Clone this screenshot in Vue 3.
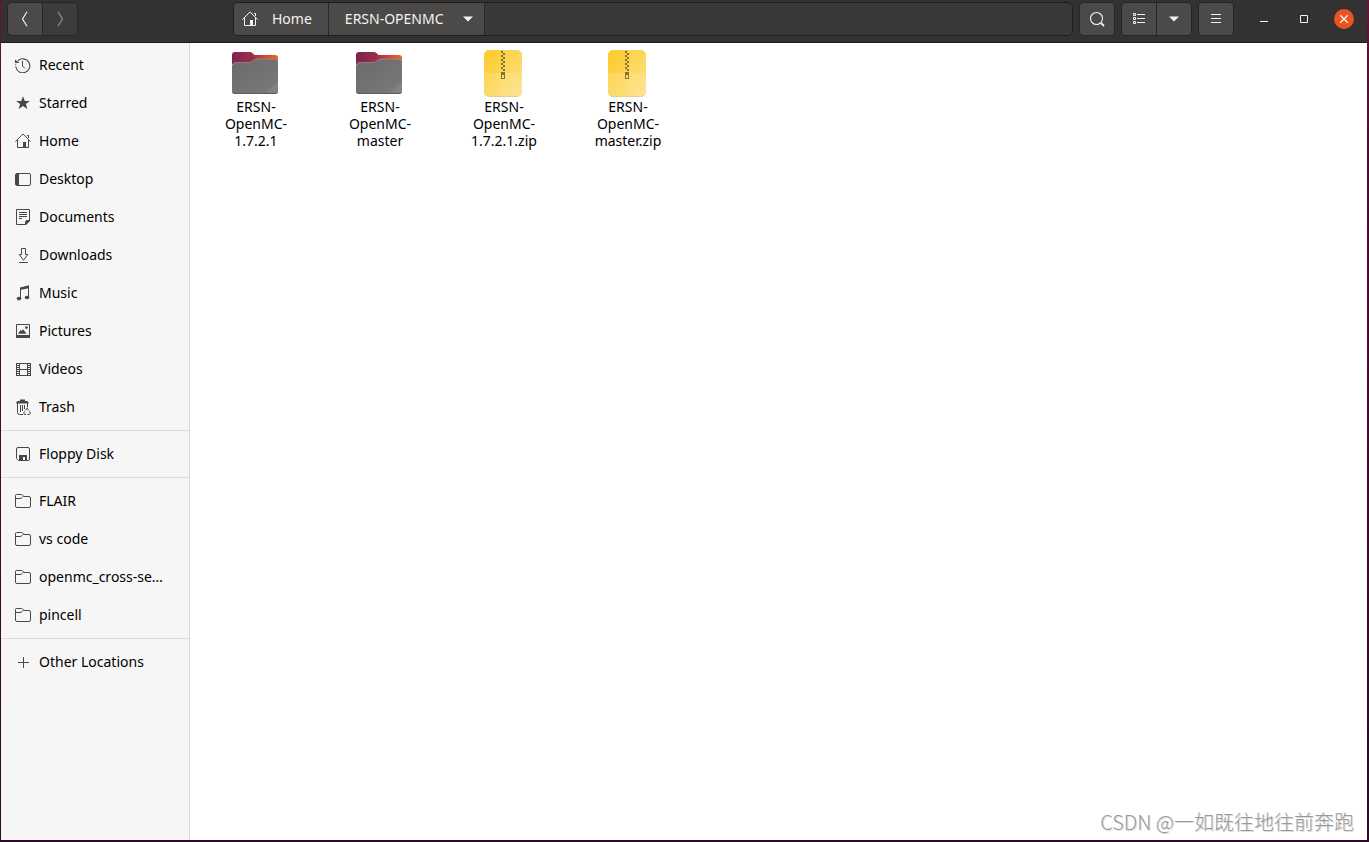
<script setup>
const groups = [
  [
    { icon: 'recent', label: 'Recent' },
    { icon: 'star', label: 'Starred' },
    { icon: 'home', label: 'Home' },
    { icon: 'desktop', label: 'Desktop' },
    { icon: 'documents', label: 'Documents' },
    { icon: 'downloads', label: 'Downloads' },
    { icon: 'music', label: 'Music' },
    { icon: 'pictures', label: 'Pictures' },
    { icon: 'videos', label: 'Videos' },
    { icon: 'trash', label: 'Trash' },
  ],
  [{ icon: 'floppy', label: 'Floppy Disk' }],
  [
    { icon: 'folder', label: 'FLAIR' },
    { icon: 'folder', label: 'vs code' },
    { icon: 'folder', label: 'openmc_cross-se…' },
    { icon: 'folder', label: 'pincell' },
  ],
  [{ icon: 'plus', label: 'Other Locations' }],
]

const files = [
  { type: 'folder', lines: ['ERSN-', 'OpenMC-', '1.7.2.1'] },
  { type: 'folder', lines: ['ERSN-', 'OpenMC-', 'master'] },
  { type: 'zip', lines: ['ERSN-', 'OpenMC-', '1.7.2.1.zip'] },
  { type: 'zip', lines: ['ERSN-', 'OpenMC-', 'master.zip'] },
]

const teeth = Array.from({ length: 10 }, (_, i) => ({ x: i % 2 ? 24 : 22, y: 2 + i * 2 }))
</script>

<template>
  <svg class="defs" aria-hidden="true">
    <defs>
      <linearGradient id="tab" x1="0" y1="0" x2="1" y2="0">
        <stop offset="0" stop-color="#7c2450" />
        <stop offset="0.45" stop-color="#9c2f48" />
        <stop offset="0.75" stop-color="#d94c30" />
        <stop offset="1" stop-color="#f0602a" />
      </linearGradient>
      <linearGradient id="front" x1="0" y1="0" x2="1" y2="1">
        <stop offset="0" stop-color="#6a6a6a" />
        <stop offset="1" stop-color="#7a7a7a" />
      </linearGradient>
      <linearGradient id="zip" x1="0" y1="0" x2="1" y2="1">
        <stop offset="0" stop-color="#fdca2c" />
        <stop offset="1" stop-color="#fde07a" />
      </linearGradient>
      <symbol id="i-recent" viewBox="0 0 16 16">
        <path d="M2.8 3.9A7 7 0 1 1 .9 10" fill="none" stroke="currentColor" stroke-width="1.1" />
        <path d="M.9 10A7 7 0 0 1 .7 7" fill="none" stroke="currentColor" stroke-dasharray="1 1" />
        <path d="M0 2.5V6H4.5z" fill="currentColor" />
        <path d="M7.5 4v5l2.5 2.5" fill="none" stroke="currentColor" />
      </symbol>
      <symbol id="i-star" viewBox="0 0 16 16">
        <path d="M8 1.3 9.8 6h5L10.9 9l1.5 5L8 11.1 3.6 14l1.5-5L1.2 6h5z" fill="currentColor" />
      </symbol>
      <symbol id="i-home" viewBox="0 0 16 16">
        <path d="M.4 8.6 8 .9l7.6 7.7M2.5 7v7.5h11V7M13.5 5V2.5h-1.4" fill="none" stroke="currentColor" />
        <path d="M8 9h3v5.5H8z" fill="currentColor" />
      </symbol>
      <symbol id="i-desktop" viewBox="0 0 16 16">
        <rect x=".5" y="2.5" width="15" height="12" rx="1.5" fill="none" stroke="currentColor" />
        <path d="M1 3h3v11H1z" fill="currentColor" />
      </symbol>
      <symbol id="i-documents" viewBox="0 0 16 16">
        <path d="M10 15.5H1.5V.5h13V12M4 3.5h8M4 5.5h8M4 7.5h8M4 9.5h3" fill="none" stroke="currentColor" />
        <path d="M10 16v-3.5L11.5 11H15v1l-4 4z" fill="currentColor" />
      </symbol>
      <symbol id="i-downloads" viewBox="0 0 16 16">
        <path d="M6.5 1.5h4v6h2.2L8.5 13.3 4.3 7.5h2.2zM4 15.5h9" fill="none" stroke="currentColor" />
      </symbol>
      <symbol id="i-music" viewBox="0 0 16 16">
        <path d="M5 2.5 14 .3v3L6 4.8v8.7H5zM13 3h1v9.5h-1z" fill="currentColor" />
        <ellipse cx="4" cy="13.6" rx="2.3" ry="1.8" fill="currentColor" />
        <ellipse cx="12" cy="12.5" rx="2.3" ry="1.8" fill="currentColor" />
      </symbol>
      <symbol id="i-pictures" viewBox="0 0 16 16">
        <path d="M1.5 1.5h13v12h-13z" fill="none" stroke="currentColor" />
        <path d="M1 12h14v3H1zM3 10.8 5.5 7l1 1L8 6.3l3.6 4.5z" fill="currentColor" />
        <circle cx="11.4" cy="4.6" r="1.4" fill="currentColor" />
      </symbol>
      <symbol id="i-videos" viewBox="0 0 16 16">
        <path d="M4 2.5h9M4 14.5h9M4 8.5h9M4.5 2v13M12.5 2v13M1.5 2v13M15.5 2v13" fill="none" stroke="currentColor" />
        <path d="M3 2v13M14 2v13" fill="none" stroke="currentColor" stroke-width="2" stroke-dasharray="1 1" />
      </symbol>
      <symbol id="i-trash" viewBox="0 0 16 16">
        <path d="M5 2V.6h5V2h2l1.500 1v1.500H1.300V3L3 2z" fill="currentColor" />
        <path d="M2.500 4v9.500q0 2 2 2H8M12.500 4v4.500M5.500 6v7M7.500 6v6M9.500 6v4" fill="none" stroke="currentColor" />
        <path d="m10.300 11.500 1.700-2.300 1.800 2.300M14.500 12.300l.9 1.700-.9 1.500h-2M11 15.500H9.500L8.700 14l.9-1.500" fill="none" stroke="currentColor" />
      </symbol>
      <symbol id="i-floppy" viewBox="0 0 16 16">
        <path d="M3 1.5h10q1.5 0 1.5 1.5v10q0 1.5-1.5 1.5H3.5l-2-2V3q0-1.5 1.5-1.5z" fill="none" stroke="currentColor" />
        <path d="M4 9h8v5h-2v-3H8v3H4z" fill="currentColor" />
      </symbol>
      <symbol id="i-folder" viewBox="0 0 16 16">
        <path d="M.5 13V2.5q0-1 1-1h5q1 0 1.5 1l.5 1h5.500q1.500 0 1.500 1.500v8q0 1.500-1.500 1.500H2Q.5 14.500.5 13zM.5 5.500H5q1.200 0 2-1l1-1" fill="none" stroke="currentColor" />
      </symbol>
      <symbol id="i-plus" viewBox="0 0 16 16">
        <path d="M3 8.500h11M8.500 3v11" fill="none" stroke="currentColor" />
      </symbol>
    </defs>
  </svg>

  <div class="window">
    <header class="bar">
      <div class="group">
        <button class="btn" type="button" aria-label="Back">
          <svg width="16" height="16" viewBox="0 0 16 16"><path d="M10 .8 5.500 8l4.500 7.200" fill="none" stroke="currentColor" stroke-width="1.200" /></svg>
        </button>
        <button class="btn off" type="button" aria-label="Forward" disabled>
          <svg width="16" height="16" viewBox="0 0 16 16"><path d="M6 .8 10.500 8 6 15.200" fill="none" stroke="currentColor" stroke-width="1.200" /></svg>
        </button>
      </div>
      <nav class="path" aria-label="Path">
        <button class="crumb" type="button">
          <svg width="16" height="16"><use href="#i-home" /></svg>Home
        </button>
        <button class="crumb current" type="button">
          ERSN-OPENMC
          <svg width="10" height="6" viewBox="0 0 10 6"><path d="M0 .5h10L5 5.500z" fill="currentColor" /></svg>
        </button>
      </nav>
      <div class="group">
        <button class="btn" type="button" aria-label="Search">
          <svg width="16" height="16" viewBox="0 0 16 16"><circle cx="7.500" cy="7.500" r="6" fill="none" stroke="currentColor" stroke-width="1.100" /><path d="m12 12 3 3" stroke="currentColor" stroke-width="1.800" /></svg>
        </button>
      </div>
      <div class="group">
        <button class="btn" type="button" aria-label="List view">
          <svg width="16" height="16" viewBox="0 0 16 16"><path d="M2.500 2.500h2v2h-2zM2.500 6.500h2v2h-2zM2.500 10.500h2v2h-2zM6 3.500h8M6 7.500h8M6 11.500h8" fill="none" stroke="currentColor" /></svg>
        </button>
        <button class="btn" type="button" aria-label="View options">
          <svg width="10" height="6" viewBox="0 0 10 6"><path d="M0 .5h10L5 5.500z" fill="currentColor" /></svg>
        </button>
      </div>
      <div class="group">
        <button class="btn" type="button" aria-label="Menu">
          <svg width="16" height="16" viewBox="0 0 16 16"><path d="M3 3.500h10M3 7.500h10M3 11.500h10" stroke="currentColor" /></svg>
        </button>
      </div>
      <div class="controls">
        <button type="button" aria-label="Minimize">
          <svg width="20" height="20" viewBox="0 0 20 20"><path d="M6 12.500h8" stroke="currentColor" /></svg>
        </button>
        <button type="button" aria-label="Maximize">
          <svg width="20" height="20" viewBox="0 0 20 20"><path d="M6.500 6.500h7v7h-7z" fill="none" stroke="currentColor" /></svg>
        </button>
        <button class="close" type="button" aria-label="Close">
          <svg width="20" height="20" viewBox="0 0 20 20"><path d="m6.200 6.200 7.600 7.600M13.800 6.200l-7.600 7.600" stroke="currentColor" stroke-width="1.400" /></svg>
        </button>
      </div>
    </header>

    <div class="body">
      <nav class="side" aria-label="Places">
        <ul v-for="(group, g) in groups" :key="g">
          <li v-for="item in group" :key="item.label">
            <a href="#">
              <svg width="16" height="16"><use :href="'#i-' + item.icon" /></svg>
              <span>{{ item.label }}</span>
            </a>
          </li>
        </ul>
      </nav>

      <main class="files">
        <a v-for="(file, f) in files" :key="f" class="file" href="#">
          <svg v-if="file.type === 'folder'" width="48" height="48" viewBox="1 0 48 48">
            <path d="M1 15V6q0-3 3-3h15q2 0 3 1.500L23.500 6H44q3 0 3 3v6z" fill="url(#tab)" />
            <path d="M1 17q0-3 3-3h14q2 0 3.500-1.500l1-1Q24 10 26 10h18q3 0 3 3v29q0 3-3 3H4q-3 0-3-3z" fill="url(#front)" />
            <path d="M1.500 16.500Q2 13.500 4 13.500h14q2 0 3.500-1.500T26 10h18q2.500 0 2.800 2.500" fill="none" stroke="#a09a98" stroke-opacity=".7" />
            <path d="M47 32v10q0 3-3 3H34z" fill="#fff" fill-opacity=".08" />
            <path d="M1.500 43q.5 1.500 2.500 1.500h40q2 0 2.500-1.500" fill="none" stroke="#5c5c5c" />
          </svg>
          <svg v-else width="48" height="48" viewBox="1 0 48 48">
            <rect x="5" y="2" width="38" height="46" rx="5" fill="#e3cf94" />
            <rect x="5" y="1" width="38" height="46" rx="5" fill="url(#zip)" />
            <path d="M5 24h38v18q0 5-5 5H10q-5 0-5-5z" fill="#fff" fill-opacity=".13" />
            <path d="M24 1h14q5 0 5 5v41H24z" fill="#fff" fill-opacity=".06" />
            <rect v-for="t in teeth" :key="t.y" :x="t.x" :y="t.y" width="2" height="2" fill="#867332" />
            <path d="M22 23h4v7h-4zM23 26v3h2v-3z" fill="#867332" fill-rule="evenodd" />
          </svg>
          <span v-for="line in file.lines" :key="line">{{ line }}</span>
        </a>
      </main>
    </div>
    <p class="mark">CSDN @一如既往地往前奔跑</p>
  </div>
</template>

<style>
body {
  margin: 0;
  background: #2c0a28;
}
</style>

<style scoped>
.defs {
  position: absolute;
  width: 0;
  height: 0;
}
.window {
  position: relative;
  display: flex;
  flex-direction: column;
  box-sizing: border-box;
  min-height: 100vh;
  border: solid #2c0a28;
  border-width: 0 2px 2px 1px;
  border-image: linear-gradient(#6b1233, #4a0a33 20%, #2c0a28) 1;
  border-image-width: 0 2px 2px 1px;
  background: #fff;
  color: #000;
  font: 14px/17px "Noto Sans", sans-serif;
}
button {
  padding: 0;
  border: 0;
  background: none;
  color: inherit;
  font: inherit;
}
svg {
  flex: none;
}
.bar {
  display: flex;
  align-items: center;
  gap: 6px;
  box-sizing: border-box;
  height: 43px;
  padding: 0 13px 5px 6px;
  border-bottom: 1px solid #1d1a1c;
  background: #333132;
  color: #f2f2f0;
}
.group {
  display: flex;
  gap: 1px;
  border: 1px solid #262425;
  border-radius: 5px;
  background: #262425;
  overflow: hidden;
}
.btn {
  display: flex;
  align-items: center;
  justify-content: center;
  width: 34px;
  height: 32px;
  background: #4b4a48;
}
.off {
  background: #3d3c3b;
  color: #929190;
}
.path {
  display: flex;
  flex: 1;
  height: 32px;
  margin-left: 149px;
  border: 1px solid #1f1d1d;
  border-radius: 5px;
  background: #3a3836;
  overflow: hidden;
}
.crumb {
  display: flex;
  align-items: center;
  gap: 14px;
  padding: 0 16px 0 8px;
  border-right: 1px solid #2a2828;
  background: #4b4a48;
}
.current {
  gap: 19px;
  padding: 0 11px 0 16px;
}
.controls {
  display: flex;
  gap: 20px;
  margin-left: 14px;
}
.controls button {
  display: flex;
  width: 20px;
  height: 20px;
  border-radius: 50%;
}
.controls .close {
  background: #e95420;
}
.body {
  display: flex;
  flex: 1;
}
.side {
  box-sizing: border-box;
  width: 189px;
  flex: none;
  padding-top: 3px;
  border-right: 1px solid #d5d5d5;
  background: #f6f6f6;
}
.side ul {
  margin: 0;
  padding: 0;
  list-style: none;
}
.side ul + ul {
  margin-top: 4px;
  padding-top: 4px;
  border-top: 1px solid #dcdcdc;
}
.side a {
  display: flex;
  align-items: center;
  gap: 8px;
  height: 38px;
  padding: 0 14px;
  color: inherit;
  text-decoration: none;
  white-space: nowrap;
}
.side svg {
  color: #474747;
}
.side span {
  padding-bottom: 2px;
}
.files {
  display: flex;
  flex: 1;
  flex-wrap: wrap;
  align-content: flex-start;
  padding: 6px 4px;
}
.file {
  display: flex;
  flex-direction: column;
  align-items: center;
  width: 124px;
  color: inherit;
  text-decoration: none;
}
.file svg {
  margin-bottom: 1px;
}
.mark {
  position: absolute;
  right: 13px;
  bottom: 4px;
  margin: 0;
  color: #999;
  font: 300 20px/28px "Noto Sans CJK SC", sans-serif;
  text-shadow: 1px 1px 0 #ddd;
}
</style>
